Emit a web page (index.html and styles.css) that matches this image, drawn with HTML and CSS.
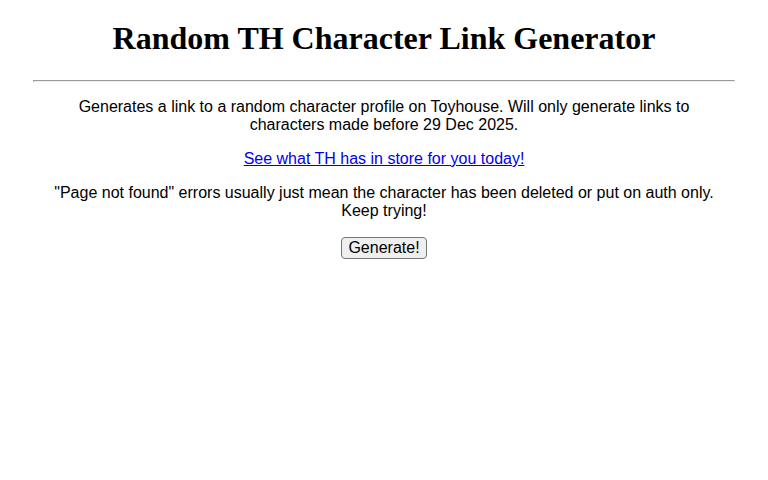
FILE: index.html
```html
<!DOCTYPE html>
<html>
<head>
  <title>Random TH Character Link Generator</title>
  <link rel="stylesheet" href="styles.css">
</head>
<body>
  <div class="page">
    <h1 class="heading">Random TH Character Link Generator</h1>
    <hr>
    <p class="info">Generates a link to a random character profile on Toyhouse. Will only generate links to characters made before 29 Dec 2025.</p>
    <p class="info"><a href="#" id="link">See what TH has in store for you today!</a></p>
    <p class="info">"Page not found" errors usually just mean the character has been deleted or put on auth only. Keep trying!</p>
    <button class="generate" onclick="generate()">Generate!</button>
  </div>
  <script>
    function generate() {
      let id = Math.floor(Math.random() * 30000000) + 1
      let link = document.getElementById('link')
      link.href = `https://toyhou.se/${id}`
      link.innerText = `https://toyhou.se/${id}`
    }
  </script>
</body>
</html>
```

FILE: styles.css
```css
body {
  margin: 0;
  font-family: "Liberation Sans", Arial, sans-serif;
}
.page {
  padding: 0 33px;
  text-align: center;
}
.heading {
  font-family: "Liberation Serif", "Times New Roman", serif;
  font-size: 32px;
  margin: 20px 0 23px;
}
.info {
  font-size: 16px;
  padding: 0 10px;
}
.generate {
  font-family: "Liberation Sans", Arial, sans-serif;
  font-size: 16px;
  padding: 1px 6px;
  margin-top: 1px;
  background-color: #efefef;
  border: 1px solid #767676;
  border-radius: 4px;
  color: black;
}
```
